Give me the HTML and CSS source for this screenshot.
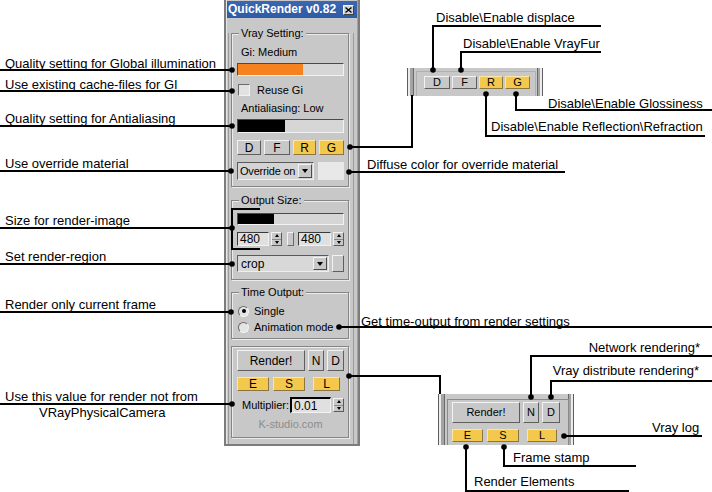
FILE: index.html
```html
<!DOCTYPE html>
<html lang="en">
<head>
    <meta charset="UTF-8">
    <meta name="viewport" content="width=device-width, initial-scale=1.0">
    <title>QuickRender v0.82</title>
    <link rel="stylesheet" href="styles.css">
</head>
<body>
<div class="sheet">

    <!-- the rollout itself -->
    <div class="qr">
        <div class="qr-title">
            <span>QuickRender v0.82</span>
            <span class="qr-close"><svg width="7" height="6" viewBox="0 0 7 6"><path d="M0.5 0.5L6.5 5.5M6.5 0.5L0.5 5.5" stroke="#000" stroke-width="1.3"/></svg></span>
        </div>
        <div class="rollout">
            <div class="grp grp-vray">
                <span class="legend">Vray Setting:</span>
                <div class="lbl">Gi: Medium</div>
                <div class="bar bar-gi"><div class="fill" style="width:62%"></div></div>
                <div class="check"><span class="box"></span>Reuse Gi</div>
                <div class="lbl lbl-aa">Antialiasing: Low</div>
                <div class="bar bar-aa"><div class="fill" style="width:45%"></div></div>
                <div class="toggles">
                    <span class="btn">D</span><span class="btn">F</span><span class="btn on">R</span><span class="btn on">G</span>
                </div>
                <div class="row-override">
                    <div class="drop drop-override"><span>Override on</span><span class="drop-arrow"></span></div>
                    <span class="swatch"></span>
                </div>
            </div>

            <div class="grp grp-size">
                <span class="legend">Output Size:</span>
                <div class="bar bar-size"><div class="fill" style="width:34%"></div></div>
                <div class="row-spin">
                    <span class="field field-w">480</span>
                    <span class="spin"><i class="up"></i><i class="dn"></i></span>
                    <span class="lock"></span>
                    <span class="field field-h">480</span>
                    <span class="spin"><i class="up"></i><i class="dn"></i></span>
                </div>
                <div class="row-crop">
                    <div class="drop drop-crop"><span>crop</span><span class="drop-arrow"></span></div>
                    <span class="btn btn-region"></span>
                </div>
            </div>

            <div class="grp grp-time">
                <span class="legend">Time Output:</span>
                <div class="radio"><span class="dot checked"></span>Single</div>
                <div class="radio radio-anim"><span class="dot"></span>Animation mode</div>
            </div>

            <div class="grp grp-render">
                <div class="row-render">
                    <span class="btn btn-render">Render!</span>
                    <span class="btn btn-n">N</span>
                    <span class="btn btn-d">D</span>
                </div>
                <div class="row-esl">
                    <span class="btn on">E</span><span class="btn on">S</span><span class="btn on">L</span>
                </div>
                <div class="row-mult">
                    <span class="mult-lbl">Multiplier:</span>
                    <span class="field field-mult">0.01</span>
                    <span class="spin"><i class="up"></i><i class="dn"></i></span>
                </div>
                <div class="credit">K-studio.com</div>
            </div>
        </div>
    </div>

    <!-- close-ups -->
    <div class="inset inset-flags">
        <div class="inset-grp">
            <span class="btn">D</span><span class="btn">F</span><span class="btn on">R</span><span class="btn on">G</span>
        </div>
    </div>

    <div class="inset inset-render">
        <div class="inset-grp">
            <div class="inset-row-top">
                <span class="btn btn-render">Render!</span>
                <span class="btn btn-n">N</span>
                <span class="btn btn-d">D</span>
            </div>
            <div class="inset-row-esl">
                <span class="btn on">E</span><span class="btn on">S</span><span class="btn on">L</span>
            </div>
        </div>
    </div>

    <!-- callout lines -->
    <svg class="wires" width="712" height="492" viewBox="0 0 712 492">
        <g fill="none" stroke="#000" stroke-width="2">
            <path d="M0 70H232"/>
            <path d="M0 91H232"/>
            <path d="M0 126H232"/>
            <path d="M0 171H231"/>
            <path d="M0 228H232"/>
            <path d="M260 209H232V249H260"/>
            <path d="M0 264H232"/>
            <path d="M0 312H231"/>
            <path d="M0 404H232"/>
            <path d="M350 147H412V95"/>
            <path d="M349 172H565"/>
            <path d="M339 327H712"/>
            <path d="M349 376H440V394"/>
            <path d="M433 70V26H601"/>
            <path d="M461 70V52H601"/>
            <path d="M516 94V110H712"/>
            <path d="M486 94V136H705"/>
            <path d="M531 397V356H712"/>
            <path d="M551 397V381H712"/>
            <path d="M564 436H702"/>
            <path d="M504 447V466H636"/>
            <path d="M466 447V491H629"/>
        </g>
        <g fill="#000">
            <circle cx="232" cy="70" r="2.8"/>
            <circle cx="232" cy="91" r="2.8"/>
            <circle cx="232" cy="126" r="2.8"/>
            <circle cx="231" cy="171" r="2.8"/>
            <circle cx="232" cy="228" r="2.8"/>
            <circle cx="232" cy="264" r="2.8"/>
            <circle cx="231" cy="312" r="2.8"/>
            <circle cx="232" cy="404" r="2.8"/>
            <circle cx="350" cy="147" r="2.8"/>
            <circle cx="349" cy="172" r="2.8"/>
            <circle cx="339" cy="327" r="2.8"/>
            <circle cx="349" cy="376" r="2.8"/>
            <circle cx="433" cy="70" r="2.8"/>
            <circle cx="461" cy="70" r="2.8"/>
            <circle cx="516" cy="94" r="2.8"/>
            <circle cx="486" cy="94" r="2.8"/>
            <circle cx="531" cy="397" r="2.8"/>
            <circle cx="551" cy="397" r="2.8"/>
            <circle cx="564" cy="436" r="2.8"/>
            <circle cx="504" cy="447" r="2.8"/>
            <circle cx="466" cy="447" r="2.8"/>
        </g>
    </svg>

    <!-- callout texts -->
    <div class="note n-gi">Quality setting for Global illumination</div>
    <div class="note n-cache">Use existing cache-files for GI</div>
    <div class="note n-aa">Quality setting for Antialiasing</div>
    <div class="note n-override">Use override material</div>
    <div class="note n-size">Size for render-image</div>
    <div class="note n-region">Set render-region</div>
    <div class="note n-frame">Render only current frame</div>
    <div class="note n-mult">Use this value for render not from</div>
    <div class="note n-cam">VRayPhysicalCamera</div>
    <div class="note n-diffuse">Diffuse color for override material</div>
    <div class="note n-time">Get time-output from render settings</div>
    <div class="note n-disp">Disable\Enable displace</div>
    <div class="note n-fur">Disable\Enable VrayFur</div>
    <div class="note n-gloss">Disable\Enable Glossiness</div>
    <div class="note n-refl">Disable\Enable Reflection\Refraction</div>
    <div class="note n-net">Network rendering*</div>
    <div class="note n-dist">Vray distribute rendering*</div>
    <div class="note n-log">Vray log</div>
    <div class="note n-stamp">Frame stamp</div>
    <div class="note n-elem">Render Elements</div>
</div>
</body>
</html>
```

FILE: styles.css
```css
body {
    margin: 0;
    background: #fff;
    font-family: "Liberation Sans", Arial, sans-serif;
    color: #000;
}
.sheet {
    position: relative;
    width: 712px;
    height: 492px;
    overflow: hidden;
}

/* rollout window */
.qr {
    position: absolute;
    left: 224px;
    top: 0;
    width: 136px;
    height: 446px;
    box-sizing: border-box;
    background: #c8c8c8;
    border: 2px solid #7c7c7c;
    border-top: 0;
    box-shadow: inset 1px 0 0 #e6e6e6, inset -1px 0 0 #a2a2a2;
    font-size: 11px;
    white-space: nowrap;
}
.qr-title {
    display: flex;
    align-items: center;
    justify-content: space-between;
    height: 17px;
    margin: 1px 1px 0;
    padding: 0 3px 0 1px;
    background: linear-gradient(#3a66b2, #2f5aa6);
    color: #fff;
    font: bold 12px/17px "Liberation Sans", Arial, sans-serif;
}
.qr-close {
    display: flex;
    align-items: center;
    justify-content: center;
    width: 11px;
    height: 10px;
    box-sizing: border-box;
    background: #d4d4d4;
    border: 1px solid;
    border-color: #f4f4f4 #404040 #404040 #f4f4f4;
}
.rollout {
    margin: 0 4px 0 2px;
    padding: 0 4px 6px 2px;
    border-left: 1px solid #9c9c9c;
    border-right: 1px solid #9c9c9c;
}

/* group boxes */
.grp {
    position: relative;
    display: flex;
    flex-direction: column;
    padding: 12px 4px 6px 5px;
    border: 1px solid #858585;
    box-shadow: inset 1px 1px 0 #ebebeb, 1px 1px 0 #ebebeb;
}
.legend {
    position: absolute;
    top: -7px;
    left: 7px;
    padding: 0 2px;
    background: #c8c8c8;
    line-height: 13px;
}
.grp-vray { margin-top: 15px; }
.grp-size { margin-top: 13px; padding-bottom: 7px; }
.grp-time { margin-top: 12px; padding-bottom: 5px; }
.grp-render { margin-top: 7px; padding-top: 3px; }

.lbl {
    height: 12px;
    line-height: 12px;
    padding-left: 4px;
}
.lbl-aa { margin-top: 6px; }

/* progress-like sliders */
.bar {
    box-sizing: border-box;
    background: #d6d6d6;
    border: 1px solid;
    border-color: #4a4a4a #f2f2f2 #f2f2f2 #4a4a4a;
}
.bar .fill { height: 100%; }
.bar-gi { height: 13px; margin-top: 5px; }
.bar-gi .fill { background: #f5821f; }
.bar-aa { height: 14px; margin-top: 5px; }
.bar-aa .fill,
.bar-size .fill { background: #000; }
.bar-size { height: 12px; }

.check {
    display: flex;
    align-items: center;
    gap: 7px;
    height: 12px;
    margin-top: 8px;
    padding-left: 1px;
}
.box {
    width: 12px;
    height: 12px;
    box-sizing: border-box;
    background: #e2e2e2;
    border: 1px solid;
    border-color: #6a6a6a #f2f2f2 #f2f2f2 #6a6a6a;
}

/* buttons */
.btn {
    display: flex;
    align-items: center;
    justify-content: center;
    box-sizing: border-box;
    background: #c8c8c8;
    border: 1px solid;
    border-color: #f2f2f2 #5e5e5e #5e5e5e #f2f2f2;
    font-size: 12px;
    line-height: 1;
}
.btn.on {
    background: #f4c84c;
    border-color: #fbe6a6 #8a7640 #8a7640 #fbe6a6;
}
.toggles {
    display: grid;
    grid-template-columns: 24px 26px 23px 25px;
    gap: 3px;
    height: 15px;
    margin-top: 7px;
}

/* dropdowns and fields */
.drop {
    display: flex;
    align-items: center;
    justify-content: space-between;
    box-sizing: border-box;
    padding: 0 1px 0 3px;
    background: #d4d4d4;
    border: 1px solid;
    border-color: #5a5a5a #efefef #efefef #5a5a5a;
    font-size: 11px;
    overflow: hidden;
}
.drop-arrow {
    position: relative;
    flex: none;
    width: 14px;
    height: 14px;
    box-sizing: border-box;
    background: #c8c8c8;
    border: 1px solid;
    border-color: #f2f2f2 #4a4a4a #4a4a4a #f2f2f2;
}
.drop-arrow::after {
    content: "";
    position: absolute;
    left: 3px;
    top: 4px;
    border-left: 3.5px solid transparent;
    border-right: 3.5px solid transparent;
    border-top: 4px solid #000;
}
.row-override {
    display: flex;
    gap: 4px;
    height: 18px;
    margin-top: 7px;
}
.drop-override { width: 78px; padding-left: 2px; }
.drop-override span:first-child { letter-spacing: -0.2px; }
.swatch {
    width: 26px;
    background: #e8e8e8;
}

.field {
    display: flex;
    align-items: center;
    box-sizing: border-box;
    padding-left: 2px;
    background: #e0e0e0;
    border: 1px solid;
    border-color: #3a3a3a #f2f2f2 #f2f2f2 #3a3a3a;
    font-size: 12px;
}
.spin {
    display: flex;
    flex-direction: column;
    width: 11px;
    box-sizing: border-box;
    margin-left: 2px;
    border: 1px solid;
    border-color: #f2f2f2 #5a5a5a #5a5a5a #f2f2f2;
    background: #c8c8c8;
}
.spin i {
    flex: 1;
    display: flex;
    align-items: center;
    justify-content: center;
}
.spin i::after {
    content: "";
    border-left: 2.5px solid transparent;
    border-right: 2.5px solid transparent;
}
.spin .up::after { border-bottom: 3px solid #000; }
.spin .dn { border-top: 1px solid #8a8a8a; }
.spin .dn::after { border-top: 3px solid #000; }

.row-spin {
    display: flex;
    height: 14px;
    margin-top: 7px;
}
.field-w { width: 32px; }
.lock {
    width: 7px;
    margin-left: 5px;
    box-sizing: border-box;
    border: 1px solid;
    border-color: #f2f2f2 #6a6a6a #6a6a6a #f2f2f2;
}
.field-h { width: 33px; margin-left: 4px; }

.row-crop {
    display: flex;
    gap: 3px;
    height: 17px;
    margin-top: 9px;
}
.drop-crop {
    width: 92px;
    background: #d8d8d8;
    font-size: 12px;
}
.drop-crop .drop-arrow { height: 13px; }
.btn-region { width: 12px; }

/* radios */
.radio {
    display: flex;
    align-items: center;
    gap: 5px;
    height: 12px;
    padding-left: 1px;
    font-size: 11px;
}
.radio-anim { margin-top: 4px; }
.dot {
    position: relative;
    flex: none;
    width: 11px;
    height: 11px;
    box-sizing: border-box;
    border-radius: 50%;
    background: #e4e4e4;
    border: 1px solid;
    border-color: #6a6a6a #f2f2f2 #f2f2f2 #6a6a6a;
}
.dot.checked::after {
    content: "";
    position: absolute;
    left: 2.5px;
    top: 2.5px;
    width: 4px;
    height: 4px;
    border-radius: 50%;
    background: #000;
}

/* render block */
.row-render {
    display: flex;
    gap: 3px;
    height: 21px;
}
.btn-render { width: 68px; }
.btn-n { width: 16px; }
.btn-d { width: 17px; }
.row-esl {
    display: grid;
    grid-template-columns: 32px 32px 31px;
    column-gap: 4px;
    height: 13px;
    margin-top: 6px;
}
.row-esl .btn:last-child { margin-left: 4px; }
.row-mult {
    display: flex;
    align-items: center;
    height: 16px;
    margin-top: 7px;
}
.mult-lbl {
    padding-left: 5px;
    font-size: 11px;
}
.field-mult {
    width: 41px;
    height: 16px;
    margin-left: auto;
    border-width: 2px 1px 1px 2px;
    border-color: #000 #f2f2f2 #f2f2f2 #000;
}
.row-mult .spin {
    height: 14px;
    margin-left: 2px;
}
.credit {
    height: 13px;
    margin-top: 5px;
    text-align: center;
    color: #8c8c8c;
    font-size: 11px;
    line-height: 13px;
}

/* close-ups */
.inset {
    position: absolute;
    box-sizing: border-box;
    background: #c8c8c8;
    border-left: 1px solid #5e5e5e;
    border-right: 1px solid #5e5e5e;
    box-shadow: inset 2px 0 0 #ececec, inset 5px 0 0 #a4a4a4, inset 6px 0 0 #6a6a6a,
                inset -2px 0 0 #ececec, inset -4px 0 0 #a4a4a4, inset -5px 0 0 #6a6a6a;
    overflow: hidden;
}
.inset-flags {
    left: 407px;
    top: 68px;
    width: 136px;
    height: 28px;
}
.inset-flags .inset-grp {
    display: grid;
    grid-template-columns: 26px 25px 24px 25px;
    grid-template-rows: 13px;
    gap: 2px;
    margin: 3px 6px 0 8px;
    padding: 4px 0 0 7px;
    height: 100%;
    border: 1px solid #b0b0b0;
    border-bottom: 0;
}
.inset-render {
    left: 438px;
    top: 394px;
    width: 136px;
    height: 51px;
}
.inset-render .inset-grp {
    margin: 5px 4px 0 8px;
    padding: 2px 0 0 4px;
    height: 100%;
    border: 1px solid #8a8a8a;
    border-bottom: 0;
}
.inset-row-top {
    display: flex;
    gap: 3px;
    height: 21px;
}
.inset-row-top .btn-render { width: 68px; }
.inset-row-top .btn-n { width: 16px; }
.inset-row-top .btn-d { width: 18px; }
.inset-row-esl {
    display: grid;
    grid-template-columns: 31px 32px 34px;
    column-gap: 4px;
    height: 13px;
    margin-top: 6px;
}
.inset-row-esl .btn:last-child { margin-left: 4px; }
.inset .btn { font-size: 11px; }

/* callouts */
.wires {
    position: absolute;
    left: 0;
    top: 0;
    pointer-events: none;
}
.note {
    position: absolute;
    font-size: 13px;
    line-height: 14px;
    white-space: nowrap;
}
.n-gi { left: 5px; top: 57px; }
.n-cache { left: 5px; top: 78px; }
.n-aa { left: 5px; top: 112px; }
.n-override { left: 5px; top: 157px; }
.n-size { left: 5px; top: 214px; }
.n-region { left: 5px; top: 250px; }
.n-frame { left: 5px; top: 298px; }
.n-mult { left: 5px; top: 390px; }
.n-cam { left: 39px; top: 406px; }
.n-diffuse { left: 367px; top: 158px; }
.n-time { left: 361px; top: 315px; }
.n-disp { left: 436px; top: 11px; }
.n-fur { left: 463px; top: 37px; }
.n-gloss { left: 548px; top: 97px; }
.n-refl { left: 491px; top: 120px; }
.n-net { right: 12px; top: 341px; }
.n-dist { right: 13px; top: 364px; }
.n-log { left: 652px; top: 421px; }
.n-stamp { left: 513px; top: 451px; }
.n-elem { left: 474px; top: 475px; }
```
